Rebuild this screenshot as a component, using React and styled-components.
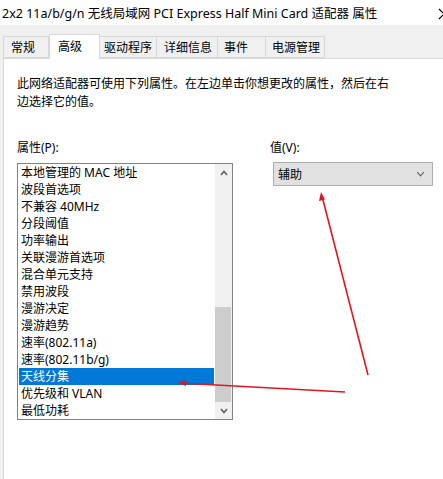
import React from "react";
import styled, { createGlobalStyle } from "styled-components";

const GlobalStyle = createGlobalStyle`
  html, body {
    margin: 0;
    padding: 0;
    background: #f0f0f0;
  }
  body {
    font-family: "Noto Sans", "Noto Sans CJK SC", sans-serif;
    font-size: 12px;
    color: #000;
  }
`;

export const Window = styled.div`
  position: relative;
  width: 443px;
  height: 479px;
  overflow: hidden;
  display: flex;
  flex-direction: column;
  background-color: #f0f0f0;
`;

export const TitleBar = styled.div`
  height: 25px;
  flex: none;
  display: flex;
  align-items: center;
  justify-content: space-between;
  padding-left: 2px;
  background-color: #fff;
  overflow: hidden;
  font-size: 12.5px;
  white-space: nowrap;
`;

export const CloseGlyph = styled.svg`
  flex: none;
  margin-right: -7px;
  margin-top: 2px;
`;

export const TabStrip = styled.div`
  height: 33px;
  flex: none;
  display: flex;
  align-items: flex-end;
  padding-left: 3px;
  position: relative;
  z-index: 1;
`;

export const Tab = styled.div`
  box-sizing: border-box;
  width: ${(p) => p.$w}px;
  height: ${(p) => (p.$active ? 25 : 22)}px;
  margin-bottom: ${(p) => (p.$active ? -1 : 0)}px;
  padding-left: ${(p) => p.$pad}px;
  display: flex;
  align-items: center;
  border: 1px solid #d9d9d9;
  border-bottom: ${(p) => (p.$active ? "none" : "1px solid #d9d9d9")};
  border-left: ${(p) => (p.$first || p.$active ? "1px solid #d9d9d9" : "none")};
  background-color: ${(p) => (p.$active ? "#fff" : "#f0f0f0")};
  font-size: 12px;
  white-space: nowrap;
  padding-bottom: ${(p) => (p.$active ? 3 : 0)}px;
`;

export const Panel = styled.div`
  flex: 1;
  margin-left: 3px;
  background-color: #fff;
  border-top: 1px solid #d9d9d9;
  border-left: 1px solid #d9d9d9;
  padding: 16px 0 0 13px;
`;

export const Description = styled.p`
  margin: 0;
  width: 380px;
  line-height: 18px;
  font-size: 12px;
`;

export const Columns = styled.div`
  display: flex;
  gap: 37px;
  margin-top: 28px;
`;

export const Column = styled.div`
  display: flex;
  flex-direction: column;
`;

export const FieldLabel = styled.div`
  height: 18px;
  line-height: 18px;
  margin-bottom: 6px;
`;

export const ListBox = styled.div`
  box-sizing: border-box;
  width: 216px;
  height: 257px;
  border: 1px solid #828282;
  display: flex;
`;

export const Items = styled.div`
  flex: 1;
  padding-left: 1px;
  padding-right: 1px;
`;

export const Item = styled.div`
  height: 17px;
  line-height: 17px;
  padding-left: 2px;
  white-space: nowrap;
  background-color: ${(p) => (p.$selected ? "#0078d7" : "transparent")};
  color: ${(p) => (p.$selected ? "#fff" : "#000")};
`;

export const ScrollBar = styled.div`
  width: 17px;
  display: flex;
  flex-direction: column;
  background-color: #f0f0f0;
`;

export const ScrollButton = styled.div`
  height: 17px;
  flex: none;
  display: flex;
  align-items: center;
  justify-content: center;
`;

export const Track = styled.div`
  flex: 1;
  display: flex;
  flex-direction: column;
  justify-content: flex-end;
`;

export const Thumb = styled.div`
  height: 95px;
  margin: 0 1px 0 0;
  background-color: #cdcdcd;
`;

export const Combo = styled.div`
  box-sizing: border-box;
  width: 160px;
  height: 24px;
  margin-left: 3px;
  margin-top: -1px;
  padding: 0 7px 0 4px;
  display: flex;
  align-items: center;
  justify-content: space-between;
  background-color: #e1e1e1;
  border: 1px solid #adadad;
`;

export const Annotations = styled.svg`
  position: absolute;
  left: 0;
  top: 0;
  pointer-events: none;
`;

const tabs = [
  { label: "常规", w: 46, pad: 7 },
  { label: "高级", w: 51, pad: 8, active: true },
  { label: "驱动程序", w: 57, pad: 4 },
  { label: "详细信息", w: 61, pad: 7 },
  { label: "事件", w: 48, pad: 6 },
  { label: "电源管理", w: 59, pad: 6 },
];

const properties = [
  "本地管理的 MAC 地址",
  "波段首选项",
  "不兼容 40MHz",
  "分段阈值",
  "功率输出",
  "关联漫游首选项",
  "混合单元支持",
  "禁用波段",
  "漫游决定",
  "漫游趋势",
  "速率(802.11a)",
  "速率(802.11b/g)",
  "天线分集",
  "优先级和 VLAN",
  "最低功耗",
];

const Chevron = ({ up, w = 8, color = "#606060", sw = 1.6 }) => (
  <svg width={w} height={w / 2 + 2} viewBox="0 0 8 6">
    <path
      d={up ? "M1 5 L4 1.5 L7 5" : "M1 1 L4 4.5 L7 1"}
      fill="none"
      stroke={color}
      strokeWidth={sw}
    />
  </svg>
);

export default function App() {
  return (
    <>
      <GlobalStyle />
      <Window>
        <TitleBar>
          <span>2x2 11a/b/g/n 无线局域网 PCI Express Half Mini Card 适配器 属性</span>
          <CloseGlyph width="12" height="12" viewBox="0 0 12 12">
            <path d="M1 1 L11 11 M11 1 L1 11" stroke="#000" strokeWidth="1.2" />
          </CloseGlyph>
        </TitleBar>
        <TabStrip>
          {tabs.map((t, i) => (
            <Tab key={t.label} $w={t.w} $pad={t.pad} $active={t.active} $first={i === 0}>
              {t.label}
            </Tab>
          ))}
        </TabStrip>
        <Panel>
          <Description>
            此网络适配器可使用下列属性。在左边单击你想更改的属性，然后在右
            <br />
            边选择它的值。
          </Description>
          <Columns>
            <Column>
              <FieldLabel>属性(P):</FieldLabel>
              <ListBox>
                <Items>
                  {properties.map((p) => (
                    <Item key={p} $selected={p === "天线分集"}>
                      {p}
                    </Item>
                  ))}
                </Items>
                <ScrollBar>
                  <ScrollButton>
                    <Chevron up />
                  </ScrollButton>
                  <Track>
                    <Thumb />
                  </Track>
                  <ScrollButton>
                    <Chevron />
                  </ScrollButton>
                </ScrollBar>
              </ListBox>
            </Column>
            <Column>
              <FieldLabel>值(V):</FieldLabel>
              <Combo>
                <span>辅助</span>
                <Chevron w={9} sw={1} />
              </Combo>
            </Column>
          </Columns>
        </Panel>
        <Annotations width="443" height="479" viewBox="0 0 443 479">
          <line x1="368" y1="375" x2="322.5" y2="198" stroke="#e3161f" strokeWidth="1.6" />
          <polygon points="321,192 319,201 325,199.5" fill="#e3161f" />
          <line x1="345" y1="392" x2="184" y2="383.3" stroke="#e3161f" strokeWidth="1.6" />
          <polygon points="178,383 186,380 186,386" fill="#e3161f" />
        </Annotations>
      </Window>
    </>
  );
}
